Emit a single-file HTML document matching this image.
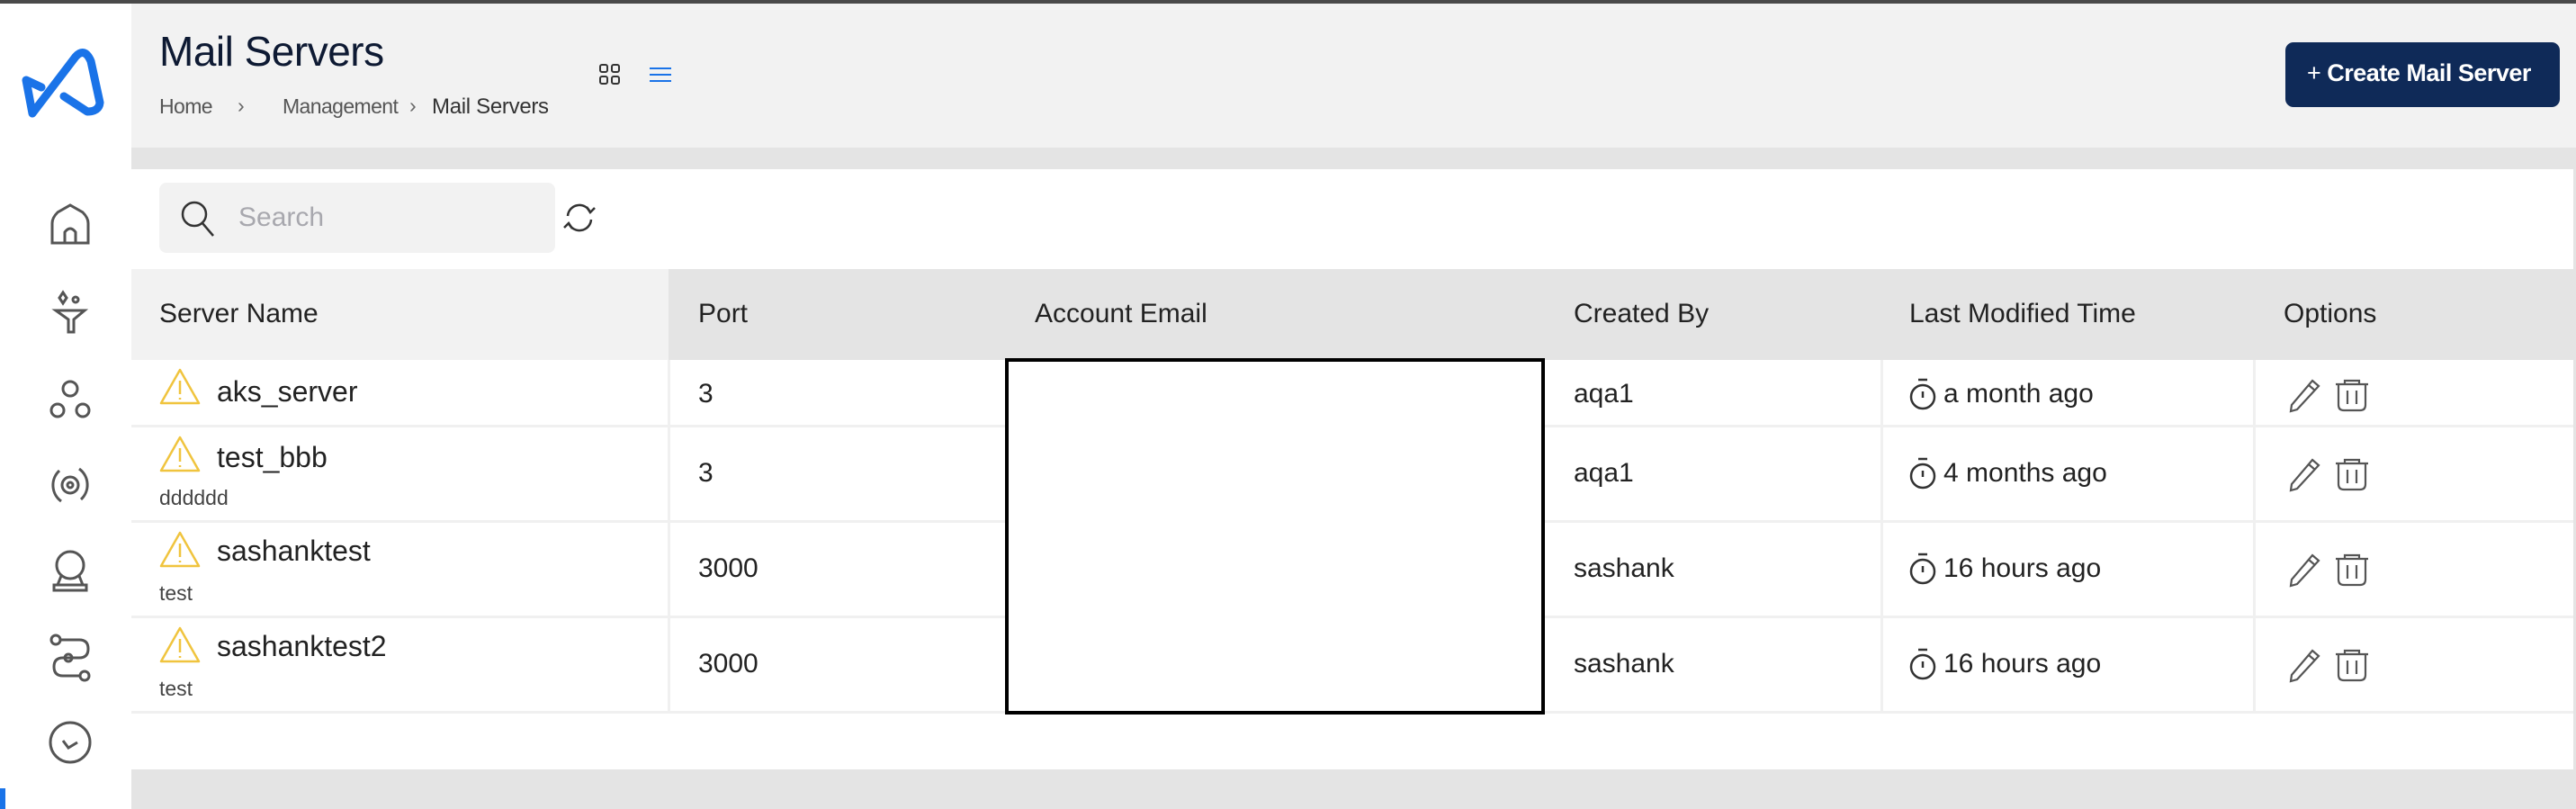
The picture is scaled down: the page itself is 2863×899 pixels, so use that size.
<!DOCTYPE html>
<html><head><meta charset="utf-8"><style>
*{box-sizing:border-box;margin:0;padding:0}
body{width:2863px;height:899px;overflow:hidden;background:#e4e4e4;font-family:"Liberation Sans",Arial,sans-serif;color:#222;position:relative}
.a{position:absolute}
.t{position:absolute;white-space:nowrap;line-height:1}
.vl{position:absolute;width:3px;background:#f0f0f0}
.hl{position:absolute;height:3px;background:#f0f0f0;left:146px;width:2714px}
svg{position:absolute;overflow:visible}
.bc{font-size:23px;letter-spacing:-0.6px}
</style></head><body>
<div class="a" style="left:0;top:0;width:2863px;height:4px;background:#4a4a4a"></div>
<div class="a" style="left:0;top:4px;width:146px;height:895px;background:#fff"></div>
<div class="a" style="left:146px;top:4px;width:2717px;height:160px;background:#f2f2f2"></div>
<div class="a" style="left:146px;top:188px;width:2714px;height:667px;background:#fff"></div>
<div class="a" style="left:0;top:876px;width:6px;height:23px;background:#1a73e8"></div>

<!-- logo -->
<svg style="left:0;top:0" width="146" height="160" viewBox="0 0 146 160"><path d="M71 107L97 124Q110 124 111 114L101 68Q94 52 84 63L36 126L29 89L46 97" fill="none" stroke="#1a73e8" stroke-width="9" stroke-linejoin="round" stroke-linecap="round"/></svg>

<!-- sidebar icons -->
<svg style="left:54px;top:226px" width="48" height="48" viewBox="0 0 48 48" fill="none" stroke="#555" stroke-width="3"><path d="M4 44V22Q4 16 10 10L24 2L38 10Q44 16 44 22V44Z M18 44V32Q24 24 30 32V44"/></svg>
<svg style="left:54px;top:323px" width="48" height="48" viewBox="0 0 48 48" fill="none" stroke="#555" stroke-width="3"><path d="M16 2L20 8L16 14L12 8Z"/><circle cx="30" cy="10" r="3"/><path d="M8 22H40L28 32V46H22V32Z"/></svg>
<svg style="left:54px;top:418px" width="48" height="48" viewBox="0 0 48 48" fill="none" stroke="#555" stroke-width="3"><circle cx="24" cy="14" r="8"/><circle cx="10" cy="38" r="7"/><circle cx="38" cy="38" r="7"/></svg>
<svg style="left:54px;top:515px" width="48" height="48" viewBox="0 0 48 48" fill="none" stroke="#555" stroke-width="3"><path d="M12 8A22 22 0 0 0 14 42M36 40A22 22 0 0 0 34 6"/><circle cx="24" cy="24" r="9"/><circle cx="24" cy="24" r="3"/></svg>
<svg style="left:54px;top:610px" width="48" height="48" viewBox="0 0 48 48" fill="none" stroke="#555" stroke-width="3"><circle cx="24" cy="18" r="15"/><path d="M14 30L10 40H38L34 30M6 40H42V46H6Z"/></svg>
<svg style="left:54px;top:705px" width="48" height="48" viewBox="0 0 48 48" fill="none" stroke="#555" stroke-width="3"><circle cx="8" cy="6" r="5"/><path d="M13 6H34Q44 6 44 16Q44 26 34 26H16Q6 26 6 36Q6 46 16 46H36"/><circle cx="22" cy="26" r="4"/><circle cx="40" cy="46" r="5"/></svg>
<svg style="left:54px;top:801px" width="48" height="48" viewBox="0 0 48 48" fill="none" stroke="#555" stroke-width="3"><circle cx="24" cy="24" r="22"/><path d="M16 22L22 30L32 24"/></svg>

<!-- header -->
<div class="t" style="left:177px;top:34px;font-size:46px;color:#0e1a33;letter-spacing:-0.5px">Mail Servers</div>
<div class="t bc" style="left:177px;top:107px;color:#555">Home</div>
<div class="t bc" style="left:264px;top:106px;color:#666">›</div>
<div class="t bc" style="left:314px;top:107px;color:#555">Management</div>
<div class="t bc" style="left:455px;top:106px;color:#666">›</div>
<div class="t" style="left:480px;top:107px;color:#333;font-size:24px;letter-spacing:-0.3px">Mail Servers</div>
<svg style="left:666px;top:71px" width="24" height="24" viewBox="0 0 24 24" fill="none" stroke="#333" stroke-width="2"><rect x="1" y="1" width="8" height="8" rx="2"/><rect x="14" y="1" width="8" height="8" rx="2"/><rect x="1" y="14" width="8" height="8" rx="2"/><rect x="14" y="14" width="8" height="8" rx="2"/></svg>
<svg style="left:722px;top:75px" width="24" height="16" viewBox="0 0 24 16" stroke="#1a73e8" stroke-width="2"><path d="M0 1H24M0 8H24M0 15H24"/></svg>

<div class="a" style="left:2540px;top:47px;width:305px;height:72px;background:#0f2a58;border-radius:9px"></div>
<div class="t" style="left:2564px;top:68px;font-size:27px;color:#fff;font-weight:bold;letter-spacing:-0.5px"><span style="font-weight:normal">+</span> Create Mail Server</div>

<!-- search -->
<div class="a" style="left:177px;top:203px;width:440px;height:78px;background:#f2f2f2;border-radius:8px"></div>
<svg style="left:201px;top:223px" width="38" height="40" viewBox="0 0 38 40" fill="none" stroke="#333" stroke-width="2.5"><circle cx="15" cy="15" r="13"/><path d="M24 25L36 39"/></svg>
<div class="t" style="left:265px;top:227px;font-size:30px;color:#a8a8ae">Search</div>
<svg style="left:626px;top:225px" width="36" height="34" viewBox="0 0 36 34" fill="none" stroke="#333" stroke-width="2.5"><path d="M5 15A13 13 0 0 1 30 11M31 19A13 13 0 0 1 6 23"/><path d="M26 5L30 11L35 6M10 29L6 23L1 28"/></svg>

<!-- table header -->
<div class="a" style="left:146px;top:299px;width:597px;height:101px;background:#f2f2f2"></div>
<div class="a" style="left:743px;top:299px;width:2117px;height:101px;background:#e4e4e4"></div>
<div class="t" style="left:177px;top:334px;font-size:30px;color:#222">Server Name</div>
<div class="t" style="left:776px;top:334px;font-size:30px;color:#222">Port</div>
<div class="t" style="left:1150px;top:334px;font-size:30px;color:#222">Account Email</div>
<div class="t" style="left:1749px;top:334px;font-size:30px;color:#222">Created By</div>
<div class="t" style="left:2122px;top:334px;font-size:30px;color:#222">Last Modified Time</div>
<div class="t" style="left:2538px;top:334px;font-size:30px;color:#222">Options</div>

<!-- grid lines -->
<div class="hl" style="top:472px"></div><div class="hl" style="top:578px"></div><div class="hl" style="top:684px"></div><div class="hl" style="top:790px"></div>
<div class="vl" style="left:742px;top:400px;height:392px"></div>
<div class="vl" style="left:2090px;top:400px;height:392px"></div>
<div class="vl" style="left:2504px;top:400px;height:392px"></div>
<div class="a" style="left:1117px;top:398px;width:600px;height:396px;border:4px solid #000;background:#fff"></div>

<!-- rows -->
<svg style="left:177px;top:409px" width="46" height="42" viewBox="0 0 46 42" fill="none" stroke="#f0c43e" stroke-width="2.5"><path d="M23 2L44 39H2Z" stroke-linejoin="round"/><path d="M23 14V29M23 33V35"/></svg>
<div class="t" style="left:241px;top:419px;font-size:32px">aks_server</div>
<div class="t" style="left:776px;top:423px;font-size:30px">3</div>
<div class="t" style="left:1749px;top:423px;font-size:30px">aqa1</div>

<svg style="left:177px;top:484px" width="46" height="42" viewBox="0 0 46 42" fill="none" stroke="#f0c43e" stroke-width="2.5"><path d="M23 2L44 39H2Z" stroke-linejoin="round"/><path d="M23 14V29M23 33V35"/></svg>
<div class="t" style="left:241px;top:492px;font-size:32px">test_bbb</div>
<div class="t" style="left:177px;top:542px;font-size:23px;color:#444">dddddd</div>
<div class="t" style="left:776px;top:511px;font-size:30px">3</div>
<div class="t" style="left:1749px;top:511px;font-size:30px">aqa1</div>

<svg style="left:177px;top:590px" width="46" height="42" viewBox="0 0 46 42" fill="none" stroke="#f0c43e" stroke-width="2.5"><path d="M23 2L44 39H2Z" stroke-linejoin="round"/><path d="M23 14V29M23 33V35"/></svg>
<div class="t" style="left:241px;top:596px;font-size:32px">sashanktest</div>
<div class="t" style="left:177px;top:648px;font-size:23px;color:#444">test</div>
<div class="t" style="left:776px;top:617px;font-size:30px">3000</div>
<div class="t" style="left:1749px;top:617px;font-size:30px">sashank</div>

<svg style="left:177px;top:696px" width="46" height="42" viewBox="0 0 46 42" fill="none" stroke="#f0c43e" stroke-width="2.5"><path d="M23 2L44 39H2Z" stroke-linejoin="round"/><path d="M23 14V29M23 33V35"/></svg>
<div class="t" style="left:241px;top:702px;font-size:32px">sashanktest2</div>
<div class="t" style="left:177px;top:754px;font-size:23px;color:#444">test</div>
<div class="t" style="left:776px;top:723px;font-size:30px">3000</div>
<div class="t" style="left:1749px;top:723px;font-size:30px">sashank</div>

<!-- time + options -->
<div class="t" style="left:2160px;top:423px;font-size:30px">a month ago</div>
<div class="t" style="left:2160px;top:511px;font-size:30px">4 months ago</div>
<div class="t" style="left:2160px;top:617px;font-size:30px">16 hours ago</div>
<div class="t" style="left:2160px;top:723px;font-size:30px">16 hours ago</div>

<svg style="left:2122px;top:420px" width="30" height="36" viewBox="0 0 30 36" fill="none" stroke="#333" stroke-width="2.5"><path d="M10 2H20"/><circle cx="15" cy="21" r="13"/><path d="M15 15V22"/></svg>
<svg style="left:2122px;top:508px" width="30" height="36" viewBox="0 0 30 36" fill="none" stroke="#333" stroke-width="2.5"><path d="M10 2H20"/><circle cx="15" cy="21" r="13"/><path d="M15 15V22"/></svg>
<svg style="left:2122px;top:614px" width="30" height="36" viewBox="0 0 30 36" fill="none" stroke="#333" stroke-width="2.5"><path d="M10 2H20"/><circle cx="15" cy="21" r="13"/><path d="M15 15V22"/></svg>
<svg style="left:2122px;top:720px" width="30" height="36" viewBox="0 0 30 36" fill="none" stroke="#333" stroke-width="2.5"><path d="M10 2H20"/><circle cx="15" cy="21" r="13"/><path d="M15 15V22"/></svg>

<svg style="left:2544px;top:420px" width="90" height="38" viewBox="0 0 90 38" fill="none" stroke="#555" stroke-width="2.2"><path d="M26 3L33 9L9 35L2 37L3 30Z M22 8L29 14"/><path d="M52 7H88M62 7V3H78V7M55 7V30Q55 36 61 36H79Q85 36 85 30V7M65 14V29M75 14V29"/></svg>
<svg style="left:2544px;top:508px" width="90" height="38" viewBox="0 0 90 38" fill="none" stroke="#555" stroke-width="2.2"><path d="M26 3L33 9L9 35L2 37L3 30Z M22 8L29 14"/><path d="M52 7H88M62 7V3H78V7M55 7V30Q55 36 61 36H79Q85 36 85 30V7M65 14V29M75 14V29"/></svg>
<svg style="left:2544px;top:614px" width="90" height="38" viewBox="0 0 90 38" fill="none" stroke="#555" stroke-width="2.2"><path d="M26 3L33 9L9 35L2 37L3 30Z M22 8L29 14"/><path d="M52 7H88M62 7V3H78V7M55 7V30Q55 36 61 36H79Q85 36 85 30V7M65 14V29M75 14V29"/></svg>
<svg style="left:2544px;top:720px" width="90" height="38" viewBox="0 0 90 38" fill="none" stroke="#555" stroke-width="2.2"><path d="M26 3L33 9L9 35L2 37L3 30Z M22 8L29 14"/><path d="M52 7H88M62 7V3H78V7M55 7V30Q55 36 61 36H79Q85 36 85 30V7M65 14V29M75 14V29"/></svg>
</body></html>
